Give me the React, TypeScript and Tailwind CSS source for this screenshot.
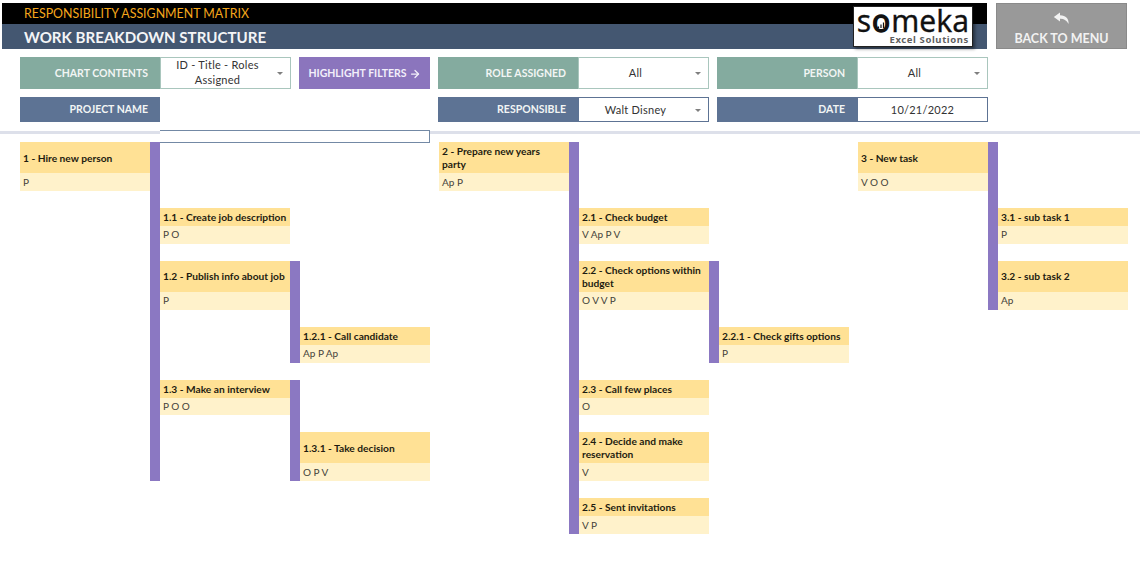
import { ArrowRight } from "lucide-react";

type Task = { title: string; roles: string; tall?: boolean; children?: Task[] };

const groups: Task[] = [
  {
    title: "1 - Hire new person",
    roles: "P",
    tall: true,
    children: [
      { title: "1.1 - Create job description", roles: "P O" },
      {
        title: "1.2 - Publish info about job",
        roles: "P",
        tall: true,
        children: [{ title: "1.2.1 - Call candidate", roles: "Ap P Ap" }],
      },
      {
        title: "1.3 - Make an interview",
        roles: "P O O",
        children: [{ title: "1.3.1 - Take decision", roles: "O P V", tall: true }],
      },
    ],
  },
  {
    title: "2 - Prepare new years\nparty",
    roles: "Ap P",
    tall: true,
    children: [
      { title: "2.1 - Check budget", roles: "V Ap P V" },
      {
        title: "2.2 - Check options within\nbudget",
        roles: "O V V P",
        tall: true,
        children: [{ title: "2.2.1 - Check gifts options", roles: "P" }],
      },
      { title: "2.3 - Call few places", roles: "O" },
      { title: "2.4 - Decide and make\nreservation", roles: "V", tall: true },
      { title: "2.5 - Sent invitations", roles: "V P" },
    ],
  },
  {
    title: "3 - New task",
    roles: "V O O",
    tall: true,
    children: [
      { title: "3.1 - sub task 1", roles: "P" },
      { title: "3.2 - sub task 2", roles: "Ap", tall: true },
    ],
  },
];

function Card({ task }: { task: Task }) {
  return (
    <div className="w-[130px] shrink-0 self-start text-[10px] leading-[13px] text-[#44423a]">
      <div
        className={`flex items-center whitespace-pre-line bg-[#ffe195] pl-[3px] pt-[1px] text-[10.2px] font-bold text-[#1d1b10] ${
          task.tall ? "h-[31px]" : "h-[18px]"
        }`}
      >
        {task.title}
      </div>
      <div
        className={`flex items-center bg-[#fff2cb] pl-[3px] ${
          task.tall ? "h-[18px]" : "h-[17.75px]"
        }`}
      >
        {task.roles}
      </div>
    </div>
  );
}

function TaskNode({ task }: { task: Task }) {
  return (
    <div className="flex">
      <Card task={task} />
      {task.children && (
        <>
          <div className="w-[10px] shrink-0 bg-[#8b78c2]" />
          <div className={`flex flex-col gap-[17px] ${task.tall ? "pt-[66px]" : "pt-[52.75px]"}`}>
            {task.children.map((c) => (
              <TaskNode key={c.title} task={c} />
            ))}
          </div>
        </>
      )}
    </div>
  );
}

function Caret() {
  return <span className="absolute right-[7px] top-1/2 h-0 w-0 -translate-y-[1px] border-x-[3px] border-t-[3px] border-x-transparent border-t-[#7f7f7f]" />;
}

function Field({
  label,
  value,
  tone,
  select = true,
}: {
  label: string;
  value: string;
  tone: "teal" | "blue";
  select?: boolean;
}) {
  const teal = tone === "teal";
  return (
    <div className="flex w-[271px]">
      <div
        className={`flex w-[140px] items-center justify-end pr-[12px] pt-[1px] text-[10.5px] font-bold text-[#f2f5f4] ${
          teal ? "bg-[#84ab9f]" : "bg-[#5d7394]"
        }`}
      >
        {label}
      </div>
      <div
        className={`relative flex w-[131px] items-center justify-center border bg-white text-center text-[11px] leading-[15px] tracking-[0.25px] text-[#333] ${
          select ? "pr-[16px]" : ""
        } ${teal ? "border-[#a9c6bd] pb-[2px]" : "border-[#5d7394]"}`}
      >
        {value}
        {select && <Caret />}
      </div>
    </div>
  );
}

export default function App() {
  return (
    <main className="relative h-[585px] w-[1140px] overflow-hidden bg-white font-['Lato',sans-serif]">
      {/* Title bar */}
      <header className="flex items-start pl-[2px] pt-[3px]">
        <div className="relative w-[985px]">
          <div className="flex h-[21px] items-center bg-black pl-[22px] pt-[2px] text-[12.4px] text-[#f5a71c]">
            RESPONSIBILITY ASSIGNMENT MATRIX
          </div>
          <div className="flex h-[25px] items-center bg-[#445771] pl-[22px] pt-[1px] text-[15.1px] font-bold text-[#f4f5f7]">
            WORK BREAKDOWN STRUCTURE
          </div>
          {/* Logo */}
          <div className="absolute left-[851px] top-[3px] flex h-[41px] w-[120px] flex-col items-end border border-[#222] bg-white pr-[3px] shadow-[2px_2px_3px_rgba(0,0,0,0.45)]">
            <div className="flex text-[30px] leading-[27px] text-[#111] font-['Noto_Sans',sans-serif] [-webkit-text-stroke:0.3px_#111]">
              s
              <span className="relative mx-[1px] [-webkit-text-stroke:1.3px_#111]">
                o
                <svg className="absolute left-[5px] top-[14px]" width="8" height="8" viewBox="0 0 8 8">
                  <path d="M1.5 7V5.5M4 7V3.5M6.5 7V1.5" stroke="#111" strokeWidth="1.2" fill="none" />
                </svg>
              </span>
              meka
            </div>
            <div className="text-[9.5px] leading-[11px] font-bold tracking-[0.6px] text-[#5f5f5f] font-['Noto_Sans',sans-serif]">
              Excel Solutions
            </div>
          </div>
        </div>
        <button className="ml-[9px] flex h-[46px] w-[131px] flex-col items-center border border-[#8a8a8a] bg-[#999999] pt-[8px] text-[12.5px] font-bold leading-[17px] text-[#f2f2f2]">
          <svg width="17" height="13" viewBox="0 0 17 13" fill="#f2f2f2">
            <path d="M7 0.5 L0.8 5 L7 9.5 V6.8 C10.5 6.6 13.2 7.8 15.6 12 C16 7 13 3.4 7 3.2 Z" />
          </svg>
          <span className="mt-[5px]">BACK TO MENU</span>
        </button>
      </header>

      {/* Filters */}
      <section className="mt-[8px] flex flex-col gap-[8px] px-[20px]">
        <div className="flex h-[32px] gap-[8px]">
          <Field label="CHART CONTENTS" value="ID - Title - Roles Assigned" tone="teal" />
          <button className="flex w-[131px] items-center justify-center gap-[2px] bg-[#8b75bd] pt-[1px] text-[10.5px] font-bold text-[#f2effa]">
            HIGHLIGHT FILTERS
            <ArrowRight size={12} strokeWidth={2.5} />
          </button>
          <Field label="ROLE ASSIGNED" value="All" tone="teal" />
          <Field label="PERSON" value="All" tone="teal" />
        </div>
        <div className="flex h-[25px] gap-[8px]">
          <div className="flex w-[410px]">
            <div className="flex w-[140px] items-center justify-end bg-[#5d7394] pr-[12px] pt-[1px] text-[10.5px] font-bold text-[#f2f5f4]">
              PROJECT NAME
            </div>
          </div>
          <Field label="RESPONSIBLE" value="Walt Disney" tone="blue" />
          <Field label="DATE" value="10/21/2022" tone="blue" select={false} />
        </div>
      </section>

      {/* Divider */}
      <div className="mt-[9px] h-[3px] bg-[#dde0ea]" />
      {/* Project name cell, sits over the divider */}
      <div className="absolute left-[160px] top-[130px] h-[13px] w-[270px] border border-l-0 border-[#7389a5] bg-white" />

      {/* Breakdown tree */}
      <section className="mt-[8px] flex pl-[20px]">
        {groups.map((g) => (
          <div key={g.title} className="w-[419px] shrink-0">
            <div className="w-fit">
              <TaskNode task={g} />
            </div>
          </div>
        ))}
      </section>
    </main>
  );
}
